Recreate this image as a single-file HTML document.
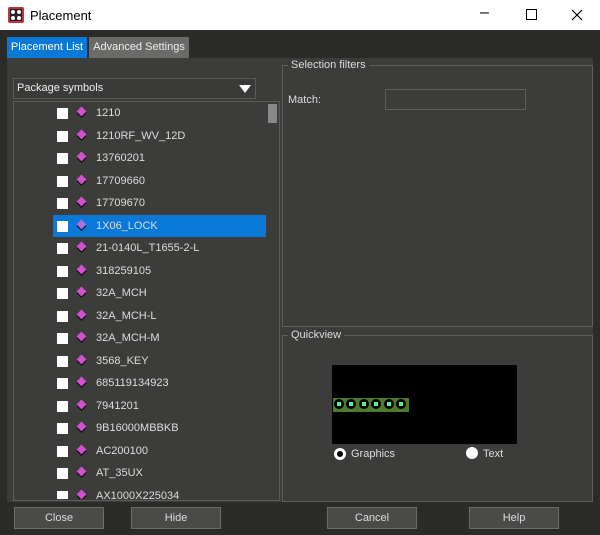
<!DOCTYPE html><html><head><style>
body{margin:0;width:600px;height:535px;background:#2b2b2a;font-family:"Liberation Sans",sans-serif;font-size:11px;color:#ddd;position:relative;overflow:hidden}
.a{position:absolute}
.tb{left:0;top:0;width:600px;height:30px;background:#fff;color:#000}
.btn{position:absolute;top:507px;height:20px;width:88px;background:#4a4a48;border:1px solid #6c6c6a;text-align:center;line-height:20px;color:#ddd}
.row{position:absolute;left:53px;width:213px;height:22px;line-height:22px}
.cb{position:absolute;left:4px;top:6px;width:11px;height:11px;background:#fff}
.ic{position:absolute;left:25px;top:6px;width:7px;height:7px;background:#d050d0;transform:rotate(45deg);box-shadow:1px 1px 0 #000}
.tx{position:absolute;left:43px}
</style></head><body>
<div class="a tb">
<div class="a" style="left:8px;top:7px;width:16px;height:16px;background:#c03040;border-radius:2px"><div class="a" style="left:2px;top:2px;width:12px;height:12px;background:#222"></div><div class="a" style="left:3px;top:3px;width:4px;height:4px;border-radius:50%;background:#fff"></div><div class="a" style="left:9px;top:9px;width:4px;height:4px;border-radius:50%;background:#fff"></div><div class="a" style="left:9px;top:3px;width:4px;height:4px;border-radius:50%;background:#fff"></div><div class="a" style="left:3px;top:9px;width:4px;height:4px;border-radius:50%;background:#fff"></div></div>
<div class="a" style="left:30px;top:8px;font-size:13px">Placement</div>
<div class="a" style="left:480px;top:4px;font-size:16px">–</div>
<div class="a" style="left:526px;top:9px;width:9px;height:9px;border:1px solid #000"></div>
<svg class="a" style="left:571px;top:9px" width="12" height="12"><path d="M1 1L11 11M11 1L1 11" stroke="#000" stroke-width="1.2"/></svg>
</div>
<div class="a" style="left:7px;top:37px;width:80px;height:21px;background:#0a78d7;color:#fff;line-height:21px;text-align:center">Placement List</div>
<div class="a" style="left:89px;top:37px;width:100px;height:21px;background:#6a6a68;color:#eee;line-height:21px;text-align:center">Advanced Settings</div>
<div class="a" style="left:7px;top:58px;width:586px;height:444px;background:#3c3c3a"></div>
<div class="a" style="left:13px;top:78px;width:241px;height:19px;border:1px solid #5a5a58;background:#3a3a38;line-height:19px;color:#eee"><span style="margin-left:3px">Package symbols</span><div class="a" style="right:4px;top:6px;border-left:6px solid transparent;border-right:6px solid transparent;border-top:8px solid #fff"></div></div>
<div class="a" style="left:13px;top:101px;width:265px;height:398px;border:1px solid #5c5c5a;overflow:hidden">
<div class="a" style="left:254px;top:2px;width:9px;height:19px;background:#888"></div>
</div>
<div class="a" style="left:14px;top:102px;width:265px;height:397px;overflow:hidden">
<div class="row" style="top:0px;left:39px"><div class="cb"></div><div class="ic"></div><div class="tx">1210</div></div>
<div class="row" style="top:22.5px;left:39px"><div class="cb"></div><div class="ic"></div><div class="tx">1210RF_WV_12D</div></div>
<div class="row" style="top:45px;left:39px"><div class="cb"></div><div class="ic"></div><div class="tx">13760201</div></div>
<div class="row" style="top:67.5px;left:39px"><div class="cb"></div><div class="ic"></div><div class="tx">17709660</div></div>
<div class="row" style="top:90px;left:39px"><div class="cb"></div><div class="ic"></div><div class="tx">17709670</div></div>
<div class="row" style="top:112.5px;left:39px;background:#0a78d7"><div class="cb"></div><div class="ic" style="background:#b070e0"></div><div class="tx">1X06_LOCK</div></div>
<div class="row" style="top:135px;left:39px"><div class="cb"></div><div class="ic"></div><div class="tx">21-0140L_T1655-2-L</div></div>
<div class="row" style="top:157.5px;left:39px"><div class="cb"></div><div class="ic"></div><div class="tx">318259105</div></div>
<div class="row" style="top:180px;left:39px"><div class="cb"></div><div class="ic"></div><div class="tx">32A_MCH</div></div>
<div class="row" style="top:202.5px;left:39px"><div class="cb"></div><div class="ic"></div><div class="tx">32A_MCH-L</div></div>
<div class="row" style="top:225px;left:39px"><div class="cb"></div><div class="ic"></div><div class="tx">32A_MCH-M</div></div>
<div class="row" style="top:247.5px;left:39px"><div class="cb"></div><div class="ic"></div><div class="tx">3568_KEY</div></div>
<div class="row" style="top:270px;left:39px"><div class="cb"></div><div class="ic"></div><div class="tx">685119134923</div></div>
<div class="row" style="top:292.5px;left:39px"><div class="cb"></div><div class="ic"></div><div class="tx">7941201</div></div>
<div class="row" style="top:315px;left:39px"><div class="cb"></div><div class="ic"></div><div class="tx">9B16000MBBKB</div></div>
<div class="row" style="top:337.5px;left:39px"><div class="cb"></div><div class="ic"></div><div class="tx">AC200100</div></div>
<div class="row" style="top:360px;left:39px"><div class="cb"></div><div class="ic"></div><div class="tx">AT_35UX</div></div>
<div class="row" style="top:382.5px;left:39px"><div class="cb"></div><div class="ic"></div><div class="tx">AX1000X225034</div></div>
</div>
<div class="a" style="left:282px;top:65px;width:309px;height:260px;border:1px solid #5e5e5c"></div>
<div class="a" style="left:288px;top:59px;background:#3c3c3a;padding:0 3px;color:#ddd">Selection filters</div>
<div class="a" style="left:288px;top:94px">Match:</div>
<div class="a" style="left:385px;top:89px;width:139px;height:19px;border:1px solid #5e5e5c"></div>
<div class="a" style="left:282px;top:335px;width:309px;height:165px;border:1px solid #5e5e5c"></div>
<div class="a" style="left:288px;top:329px;background:#3c3c3a;padding:0 3px">Quickview</div>
<div class="a" style="left:332px;top:365px;width:185px;height:79px;background:#000"></div>
<div class="a" style="left:333px;top:398px;width:76px;height:14px;background:#4a7a2a"></div>
<div class="a" style="left:334px;top:399px;display:flex">
<span style="width:10px;height:10px;margin-right:2.4px;border-radius:50%;background:#000;display:flex;align-items:center;justify-content:center"><i style="width:4px;height:4px;background:#5e9"></i></span><span style="width:10px;height:10px;margin-right:2.4px;border-radius:50%;background:#000;display:flex;align-items:center;justify-content:center"><i style="width:4px;height:4px;background:#5e9"></i></span><span style="width:10px;height:10px;margin-right:2.4px;border-radius:50%;background:#000;display:flex;align-items:center;justify-content:center"><i style="width:4px;height:4px;background:#5e9"></i></span><span style="width:10px;height:10px;margin-right:2.4px;border-radius:50%;background:#000;display:flex;align-items:center;justify-content:center"><i style="width:4px;height:4px;background:#5e9"></i></span><span style="width:10px;height:10px;margin-right:2.4px;border-radius:50%;background:#000;display:flex;align-items:center;justify-content:center"><i style="width:4px;height:4px;background:#5e9"></i></span><span style="width:10px;height:10px;border-radius:50%;background:#000;display:flex;align-items:center;justify-content:center"><i style="width:4px;height:4px;background:#5e9"></i></span></div>
<div class="a" style="left:334px;top:448px;width:6px;height:6px;border:3px solid #fff;border-radius:50%;background:#000"></div>
<div class="a" style="left:351px;top:448px">Graphics</div>
<div class="a" style="left:466px;top:447px;width:12px;height:12px;border-radius:50%;background:#fff"></div>
<div class="a" style="left:483px;top:448px">Text</div>
<div class="btn" style="left:14px">Close</div>
<div class="btn" style="left:131px">Hide</div>
<div class="btn" style="left:327px">Cancel</div>
<div class="btn" style="left:469px">Help</div>
</body></html>
